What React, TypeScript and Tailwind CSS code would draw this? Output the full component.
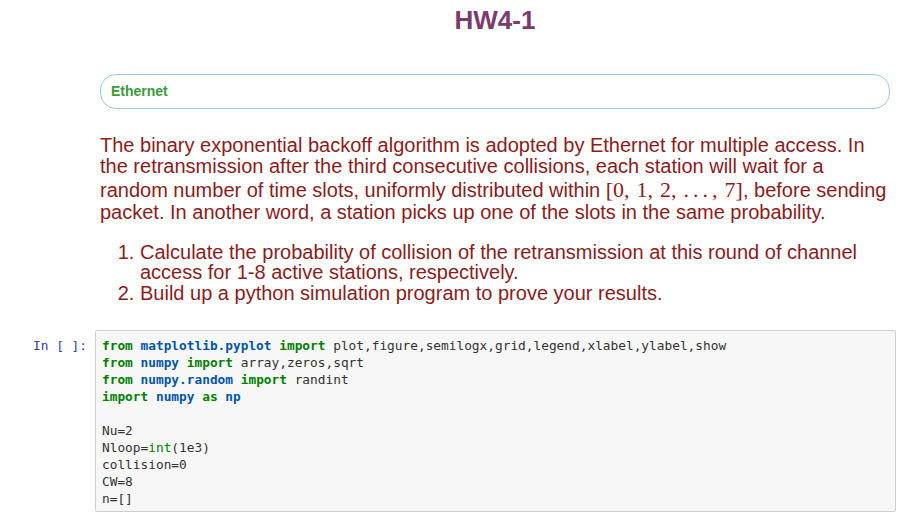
import React from "react";

const kw = "font-bold text-[#008000]";
const mod = "font-bold text-[#0055aa]";

function Code() {
  return (
    <pre className="m-0 font-['DejaVu_Sans_Mono',monospace] text-[12.8px] leading-[17px] text-[#333]">
      <span className={kw}>from</span> <span className={mod}>matplotlib.pyplot</span> <span className={kw}>import</span> plot,figure,semilogx,grid,legend,xlabel,ylabel,show{"\n"}
      <span className={kw}>from</span> <span className={mod}>numpy</span> <span className={kw}>import</span> array,zeros,sqrt{"\n"}
      <span className={kw}>from</span> <span className={mod}>numpy.random</span> <span className={kw}>import</span> randint{"\n"}
      <span className={kw}>import</span> <span className={mod}>numpy</span> <span className={kw}>as</span> <span className={mod}>np</span>{"\n"}
      {"\n"}
      Nu=2{"\n"}
      Nloop=<span className="text-[#008000]">int</span>(1e3){"\n"}
      collision=0{"\n"}
      CW=8{"\n"}
      n=[]
    </pre>
  );
}

function Math() {
  return (
    <span className="whitespace-nowrap font-['Liberation_Serif',serif] text-[22px] leading-[25px]">
      [0,<span className="ml-[7px]">1,</span>
      <span className="ml-[7px]">2,</span>
      <span className="ml-[7px]">.</span>
      <span className="ml-[4px]">.</span>
      <span className="ml-[4px]">.</span>
      <span className="ml-[4px]">,</span>
      <span className="ml-[7px]">7]</span>
    </span>
  );
}

export default function App() {
  return (
    <div className="min-h-[530px] w-[907px] bg-white font-['Liberation_Sans',Arial,sans-serif]">
      <div className="ml-[100px] w-[790px] pt-[5px]">
        <h1 className="m-0 text-center text-[26px] font-bold leading-[30px] text-[#7b3a70]">HW4-1</h1>
        <div className="mt-[39px] flex h-[35px] items-center rounded-[16px] border border-[#9ccbe0] px-[10px]">
          <span className="text-[14px] font-bold text-[#3a9a3a]">Ethernet</span>
        </div>
        <p className="mt-[26px] text-[20px] leading-[21px] text-[#8b1c1c]">
          The binary exponential backoff algorithm is adopted by Ethernet for multiple access. In the retransmission after the third consecutive collisions, each station will wait for a random number of time slots, uniformly distributed within{" "}
          <Math />, before sending packet. In another word, a station picks up one of the slots in the same probability.
        </p>
        <ol className="mt-[19px] list-decimal pl-[40px] text-[20px] leading-[20px] text-[#8b1c1c]">
          <li>Calculate the probability of collision of the retransmission at this round of channel access for 1-8 active stations, respectively.</li>
          <li className="mt-[1px]">Build up a python simulation program to prove your results.</li>
        </ol>
      </div>
      <div className="mt-[27px] flex items-start">
        <div className="w-[95px] pr-[8px] pt-[7px] text-right font-['DejaVu_Sans_Mono',monospace] text-[12.8px] leading-[17px] text-[#303f9f]">
          In&nbsp;[&nbsp;]:
        </div>
        <div className="w-[801px] rounded-[2px] border border-[#cfcfcf] bg-[#f7f7f7] px-[6px] pb-[4px] pt-[6px]">
          <Code />
        </div>
      </div>
    </div>
  );
}
